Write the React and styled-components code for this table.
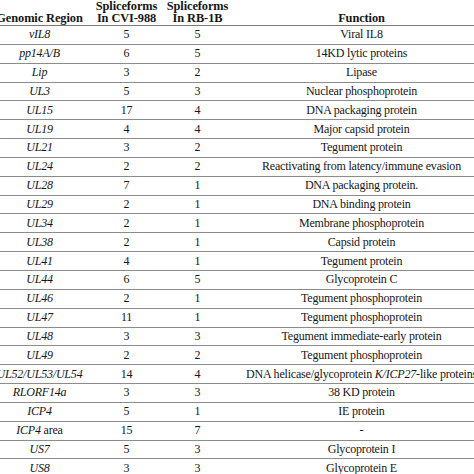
import React from 'react';
import styled, { createGlobalStyle } from 'styled-components';

const Global = createGlobalStyle`
  html, body {
    margin: 0;
    padding: 0;
    background: #fff;
    overflow: hidden;
  }
`;

const Page = styled.div`
  width: 474px;
  height: 474px;
  overflow: hidden;
  background: #fff;
`;

const Table = styled.table`
  margin-left: -12px;
  width: 502px;
  border-collapse: collapse;
  table-layout: fixed;
  font-family: "Liberation Serif", "Times New Roman", serif;
  font-size: 12px;
  letter-spacing: -0.2px;
  color: #161616;
`;

const Col = styled.col`
  width: ${p => p.w}px;
`;

const Head = styled.th`
  font-weight: bold;
  font-size: 12.4px;
  letter-spacing: -0.1px;
  line-height: 12px;
  height: 24px;
  padding: 0 0 1px;
  vertical-align: bottom;
  text-align: center;
  white-space: nowrap;
  border-bottom: 1.5px solid #7a7a7a;
`;

const Cell = styled.td`
  padding: 0;
  height: 17.85px;
  text-align: center;
  white-space: nowrap;
  line-height: 17px;
  border-bottom: 1px solid #8c8c8c;
`;

const rows = [
  [<i>vIL8</i>, 5, 5, 'Viral IL8'],
  [<i>pp14A/B</i>, 6, 5, '14KD lytic proteins'],
  [<i>Lip</i>, 3, 2, 'Lipase'],
  [<i>UL3</i>, 5, 3, 'Nuclear phosphoprotein'],
  [<i>UL15</i>, 17, 4, 'DNA packaging protein'],
  [<i>UL19</i>, 4, 4, 'Major capsid protein'],
  [<i>UL21</i>, 3, 2, 'Tegument protein'],
  [<i>UL24</i>, 2, 2, 'Reactivating from latency/immune evasion'],
  [<i>UL28</i>, 7, 1, 'DNA packaging protein.'],
  [<i>UL29</i>, 2, 1, 'DNA binding protein'],
  [<i>UL34</i>, 2, 1, 'Membrane phosphoprotein'],
  [<i>UL38</i>, 2, 1, 'Capsid protein'],
  [<i>UL41</i>, 4, 1, 'Tegument protein'],
  [<i>UL44</i>, 6, 5, 'Glycoprotein C'],
  [<i>UL46</i>, 2, 1, 'Tegument phosphoprotein'],
  [<i>UL47</i>, 11, 1, 'Tegument phosphoprotein'],
  [<i>UL48</i>, 3, 3, 'Tegument immediate-early protein'],
  [<i>UL49</i>, 2, 2, 'Tegument phosphoprotein'],
  [<i>UL52/UL53/UL54</i>, 14, 4, <>DNA helicase/glycoprotein <i>K/ICP27</i>-like proteins</>],
  [<i>RLORF14a</i>, 3, 3, '38 KD protein'],
  [<i>ICP4</i>, 5, 1, 'IE protein'],
  [<><i>ICP4</i> area</>, 15, 7, '-'],
  [<i>US7</i>, 5, 3, 'Glycoprotein I'],
  [<i>US8</i>, 3, 3, 'Glycoprotein E'],
];

export default function App() {
  return (
    <Page>
      <Global />
      <Table>
        <colgroup>
          <Col w={103} />
          <Col w={71} />
          <Col w={71} />
          <Col w={257} />
        </colgroup>
        <thead>
          <tr>
            <Head>Genomic Region</Head>
            <Head>Spliceforms<br />In CVI-988</Head>
            <Head>Spliceforms<br />In RB-1B</Head>
            <Head>Function</Head>
          </tr>
        </thead>
        <tbody>
          {rows.map((r, i) => (
            <tr key={i}>
              <Cell>{r[0]}</Cell>
              <Cell>{r[1]}</Cell>
              <Cell>{r[2]}</Cell>
              <Cell>{r[3]}</Cell>
            </tr>
          ))}
        </tbody>
      </Table>
    </Page>
  );
}
